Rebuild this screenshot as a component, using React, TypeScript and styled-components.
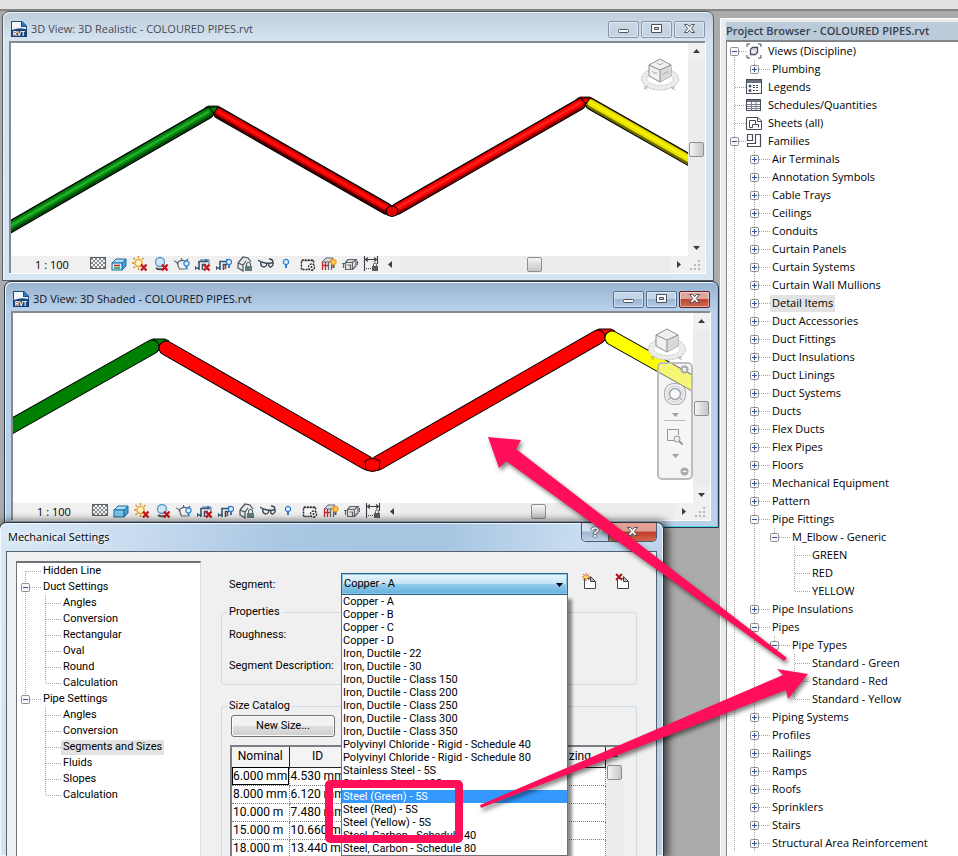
import React from 'react';
import styled, { createGlobalStyle, css } from 'styled-components';

const UI = '"Open Sans", "Noto Sans", sans-serif';
const DLG = 'Roboto, "Liberation Sans", sans-serif';
const PINK = '#ff0f5a';

const Global = createGlobalStyle`
  * { box-sizing: border-box; }
  html, body { margin: 0; padding: 0; background: #ababab; }
  body { font: 11px/18px ${UI}; color: #000; overflow: hidden; }
  ul { list-style: none; margin: 0; padding: 0; }
  button { padding: 0; margin: 0; border: 0; background: none; font: inherit; color: inherit; }
  svg { display: block; flex: none; }
`;

/* ---------- application shell ---------- */

const Shell = styled.div`
  position: relative;
  display: flex;
  flex-direction: column;
  height: 100vh;
  overflow: hidden;
`;
const Ribbon = styled.header`
  flex: none;
  height: 11px;
  background: #e1e2e4;
  border-bottom: 2px solid #858585;
`;
const Workspace = styled.main`
  flex: 1;
  min-height: 0;
  display: flex;
`;
const Desktop = styled.section`
  position: relative;
  isolation: isolate;
  flex: 1;
  min-width: 0;
  background: #ababab;
`;

/* ---------- view windows ---------- */

const ViewWindow = styled.section<{ $active?: boolean; $left: number; $right: number; $top: number }>`
  position: absolute;
  left: ${p => p.$left}px;
  right: ${p => p.$right}px;
  top: ${p => p.$top}px;
  padding: 0 8px 7px 6px;
  border: 1px solid ${p => (p.$active ? '#26384a' : '#555a60')};
  border-radius: 7px 7px 0 0;
  box-shadow: inset 1px 1px 0 #eef4fa${p => (p.$active ? ', inset -1px -1px 0 #4fd4ee' : '')};
  background: ${p =>
    p.$active
      ? 'linear-gradient(#98b2cf, #b8d0ea 28px, #b9d1ea)'
      : 'linear-gradient(#bfcddb, #d6e3f1 28px, #d7e4f2)'};
`;
const TitleBar = styled.header<{ $active?: boolean }>`
  display: flex;
  align-items: center;
  gap: 4px;
  height: 29px;
  padding: 5px 0 0 2px;
  color: ${p => (p.$active ? '#10151b' : '#454c54')};
`;
const TitleText = styled.h2`
  flex: 1;
  margin: 0;
  font: inherit;
  line-height: 16px;
`;
const Captions = styled.div`
  display: flex;
  gap: 2px;
`;
const CaptionButton = styled.button<{ $tone: 'idle' | 'active' | 'close' }>`
  display: grid;
  place-items: center;
  width: 31px;
  height: 17px;
  border-radius: 2px;
  border: 1px solid ${p => ({ idle: '#8695a8', active: '#54708f', close: '#5c2320' })[p.$tone]};
  box-shadow: inset 0 0 0 1px rgba(255, 255, 255, 0.45);
  background: ${p =>
    ({
      idle: 'linear-gradient(#cbd8e6, #c3d1e0)',
      active: 'linear-gradient(#c3d4e7 48%, #9db7d3 50%, #b4cbe4)',
      close: 'linear-gradient(#dfa79c 46%, #bd4733 50%, #cf6a50)',
    })[p.$tone]};
`;
const Frame = styled.div`
  border: solid #858a90;
  border-width: 2px 0 0 2px;
  box-shadow: 1px 1px 0 #fff;
  background: #fff;
`;
const Canvas = styled.div<{ $h: number }>`
  position: relative;
  display: flex;
  height: ${p => p.$h}px;
`;
const Drawing = styled.div`
  flex: 1;
  min-width: 0;
  overflow: hidden;
`;
const Footer = styled.footer`
  display: grid;
  grid-template-columns: 76px auto 1fr 18px;
  align-items: center;
  height: 17px;
  background: #f0f0f0;
`;
const Scale = styled.span`
  padding-left: 24px;
  line-height: 17px;
  white-space: nowrap;
`;
const Tools = styled.div`
  display: grid;
  align-self: start;
  grid-auto-flow: column;
  grid-auto-columns: 21px;
  padding-right: 1px;
`;
const ToolButton = styled.button`
  display: grid;
  place-items: center;
  height: 16px;
`;

const Scroll = styled.div<{ $row?: boolean }>`
  display: flex;
  flex-direction: ${p => (p.$row ? 'row' : 'column')};
  width: ${p => (p.$row ? 'auto' : '17px')};
  height: ${p => (p.$row ? '17px' : 'auto')};
  background: #ececec;
`;
const ScrollArrow = styled.button`
  display: grid;
  place-items: center;
  flex: none;
  width: 17px;
  height: 17px;
  background: #f0f0f0;
`;
const Track = styled.div<{ $start?: boolean }>`
  flex: 1;
  display: flex;
  flex-direction: inherit;
  align-items: center;
  justify-content: ${p => (p.$start ? 'flex-start' : 'center')};
`;
const Thumb = styled.div<{ $row?: boolean }>`
  width: 15px;
  height: 15px;
  margin: 1px;
  border: 1px solid #8e8e8e;
  border-radius: 2px;
  background: linear-gradient(${p => (p.$row ? '180deg' : '90deg')}, #f6f6f6, #dcdcdc 50%, #c6c6ca);
`;
const arrows: Record<string, string> = {
  up: 'M1 6 4.500 2 8 6z',
  down: 'M1 3 8 3 4.500 7z',
  left: 'M6 1 2 4.500 6 8z',
  right: 'M3 1 7 4.500 3 8z',
};
const Arrow = ({ dir, fill = '#3d3d3d' }: { dir: string; fill?: string }) => (
  <svg width="9" height="9" viewBox="0 0 9 9"><path d={arrows[dir]} fill={fill} /></svg>
);
const VScroll = ({ start }: { start?: boolean }) => (
  <Scroll>
    <ScrollArrow aria-label="Scroll up"><Arrow dir="up" /></ScrollArrow>
    <Track $start={start}><Thumb /></Track>
    <ScrollArrow aria-label="Scroll down"><Arrow dir="down" /></ScrollArrow>
  </Scroll>
);
const HScroll = () => (
  <Scroll $row>
    <ScrollArrow aria-label="Scroll left"><Arrow dir="left" /></ScrollArrow>
    <Track><Thumb $row /></Track>
    <ScrollArrow aria-label="Scroll right"><Arrow dir="right" /></ScrollArrow>
  </Scroll>
);

const RvtIcon = () => (
  <svg width="16" height="16" viewBox="0 0 16 16">
    <path d="M0 0H11L16 5V16H0Z" fill="#1c4d86" />
    <path d="M1 1H10V6H15V8Q8 6 1 9Z" fill="#f2f7fc" />
    <path d="M11 0 16 5H11Z" fill="#2f75b8" />
    <rect y="9" width="16" height="7" fill="#163d70" />
    <text x="8" y="15" fontSize="7" fontWeight="700" fontFamily="Liberation Mono" textAnchor="middle" fill="#fff">RVT</text>
  </svg>
);
const glyph = { fill: '#fafafa', stroke: '#4b535e' };
const MinGlyph = () => <svg width="13" height="12"><rect x="1.500" y="6.500" width="10" height="3" rx="1" {...glyph} /></svg>;
const MaxGlyph = () => (
  <svg width="13" height="12"><path d="M1.500 1.500h10v8h-10zM4.500 4.500v2h4v-2z" fillRule="evenodd" {...glyph} /></svg>
);
const CloseGlyph = () => (
  <svg width="13" height="12" viewBox="0 0 13 12">
    <path d="M1.500 1.500H4.500L6.500 3.700 8.500 1.500H11.500L8.300 5.500 11.500 9.500H8.500L6.500 7.300 4.500 9.500H1.500L4.700 5.500Z" {...glyph} />
  </svg>
);

/* ---------- view control icons ---------- */

const Svg16 = ({ children }: { children: React.ReactNode }) => (
  <svg width="16" height="16" viewBox="0 0 16 16" fill="none">{children}</svg>
);
const RedX = () => <path d="M9 8.500 14.500 14.500M14.500 8.500 9 14.500" stroke="#c4161c" strokeWidth="2.300" />;
const Bulb = ({ x = 12, y = 6, on }: { x?: number; y?: number; on?: boolean }) => (
  <g transform={`translate(${x} ${y})`}>
    <circle r="2.600" fill={on ? '#ffc94d' : '#dff0ff'} stroke={on ? '#f09a1c' : '#2a7fd0'} strokeWidth="1.200" />
    <path d="M-1 3H1V6H-1Z" fill={on ? '#555' : '#2a7fd0'} />
  </g>
);
const Pads = () => (
  <path d="M0 12H2M4 14V5.500H13M7.500 14V8.500H11M0 10V14M4 12H2M11 3V5" stroke="#34536e" strokeWidth="1.600" />
);
const Lock = () => (
  <g><path d="M9.500 10V8.500a2 2 0 0 1 4 0V10" stroke="#4a6660" strokeWidth="1.200" /><rect x="8" y="10" width="7" height="5" fill="#5d8076" /></g>
);
const checks = Array.from({ length: 35 }, (_, i) => [1 + (i % 7) * 2, 2 + Math.floor(i / 7) * 2, i % 2] as const).filter(c => c[2] === 0);

const icons: [string, (shaded?: boolean) => React.ReactNode][] = [
  ['Detail level', () => (
    <Svg16>
      <rect x=".5" y="1.500" width="15" height="11" fill="#f4f5f6" stroke="#5a5f66" />
      {checks.map(([x, y], i) => <rect key={i} x={x} y={y} width="2" height="2" fill="#858a91" />)}
    </Svg16>
  )],
  ['Visual style', s => (
    <Svg16>
      <path d="M1 7 5 3H15L11 7Z" fill="#a8e0f6" stroke="#1c6b9f" />
      <path d="M11 7 15 3V10L11 14Z" fill="#4aa3d2" stroke="#1c6b9f" />
      <rect x="1" y="7" width="10" height="7" fill={s ? '#7cc4e8' : '#c9ecfa'} stroke="#1c6b9f" />
      {!s && <><path d="M3 9.500H9" stroke="#e0202a" strokeWidth="1.500" /><path d="M3 12H9" stroke="#22a23a" strokeWidth="1.500" /></>}
    </Svg16>
  )],
  ['Sun path', () => (
    <Svg16>
      <path d="M6.500 0V2M1.500 2 3 3.500M11.500 2 10 3.500M0 7H2M1.500 12 3 10.500M6.500 12V14" stroke="#d98b1f" strokeWidth="1.300" />
      <circle cx="6.500" cy="7" r="3.600" fill="#fff0b8" stroke="#e0a02c" strokeWidth="1.300" /><RedX />
    </Svg16>
  )],
  ['Shadows', () => (
    <Svg16>
      <circle cx="7" cy="6" r="4.500" fill="#cfe6f8" stroke="#5b95c8" strokeWidth="1.300" />
      <path d="M3 12Q5 14 10 13" stroke="#555" strokeWidth="2" /><RedX />
    </Svg16>
  )],
  ['Rendering', () => (
    <Svg16>
      <path d="M4 6Q8 3 11.500 5.500M7.500 4V2M4 6Q3.500 10 5.500 13H11M4 9Q2.500 5 0 5M11.500 5.500 14 3" stroke="#5b646e" strokeWidth="1.200" fill="#f2f2f2" /><Bulb x={12.5} y={7.5} />
    </Svg16>
  )],
  ['Crop view', () => <Svg16><Pads /><path d="M5 4H14V8" stroke="#2f6fb0" /><RedX /></Svg16>],
  ['Show crop region', () => <Svg16><Pads /><path d="M9.500 9V13" stroke="#d0202a" strokeWidth="1.500" /><Bulb x={13} y={6} /></Svg16>],
  ['Lock 3D view', () => (
    <Svg16>
      <path d="M1 7 6 1 11 2 14 6M1 7V12L6 15V9M1 7 6 9 9 5" stroke="#4b535c" strokeWidth="1.200" fill="#e6e8ea" /><Lock />
    </Svg16>
  )],
  ['Temporary hide', () => (
    <Svg16>
      <path d="M0 4 3 6 9 7.500M3 6Q2 10 5.500 11 8.500 11 9 7.500M9 7.500Q10 6.500 11 7.500M11 7.500Q10 11 13 11 16 9 15 6.500L11 7.500M15 6.500Q15 3 11 3" stroke="#34424e" strokeWidth="1.300" />
    </Svg16>
  )],
  ['Reveal hidden', () => <Svg16><Bulb x={7} y={6} /></Svg16>],
  ['Worksharing', () => (
    <Svg16>
      <rect x="1.500" y="4.500" width="12" height="9" fill="#f7f7f7" stroke="#222" strokeDasharray="2 1" strokeWidth="1.400" />
      <path d="M3 3V5M6 3V5M9 3V5M12 3V5" stroke="#222" /><circle cx="11.500" cy="11" r="3" fill="#fff" stroke="#222" strokeDasharray="2 1" strokeWidth="1.300" /><circle cx="11.500" cy="11" r="1" fill="#222" />
    </Svg16>
  )],
  ['Analytical model', () => (
    <Svg16>
      <path d="M1 6 5 2H12L9 6Z" fill="#d7d9db" stroke="#62676d" /><path d="M1.500 6V14M4.500 6V14M1 9.500H8" stroke="#c4262c" strokeWidth="1.300" /><path d="M7.500 6V14M10.500 6V14" stroke="#62676d" strokeWidth="1.300" />
      <Bulb x={12.5} y={6} on />
    </Svg16>
  )],
  ['Displacement', () => (
    <Svg16>
      <path d="M3.500 6.500 6 3.500H14L10.500 6.500M14 3.500V10L10.500 13.500" stroke="#60656c" strokeWidth="1.200" fill="#d4d6d9" />
      <path d="M3.500 6.500H10.500V13.500H3.500ZM5.500 9H8.500V13.500M1.500 7V12M0 7.500H3M15.500 5V9" stroke="#60656c" strokeWidth="1.200" fill="#e4e6e8" />
    </Svg16>
  )],
  ['Constraints', () => (
    <Svg16>
      <path d="M1.500 0V15M14.500 0V8M1.500 3.500H14.500M5 1.500 2.500 3.500 5 5.500M11 1.500 13.500 3.500 11 5.500" stroke="#3b4047" strokeWidth="1.100" />
      <path d="M3 12.500H9" stroke="#3b4047" strokeDasharray="1 1" /><path d="M10.500 10V8.500a1.500 1.500 0 0 1 3 0V10" stroke="#555" /><rect x="9" y="10" width="6" height="5" fill="#5c5c5c" />
    </Svg16>
  )],
];

const ViewFooter = ({ shaded }: { shaded?: boolean }) => (
  <Footer>
    <Scale>1 : 100</Scale>
    <Tools>
      {icons.map(([name, draw]) => <ToolButton key={name} aria-label={name}>{draw(shaded)}</ToolButton>)}
    </Tools>
    <HScroll />
    <svg width="17" height="17" viewBox="0 0 17 17">
      {[[11, 4], [7, 8], [11, 8], [3, 12], [7, 12], [11, 12]].map(([x, y]) => <rect key={`${x} ${y}`} x={x} y={y} width="2" height="2" fill="#b9b9b9" />)}
    </svg>
  </Footer>
);

/* ---------- pipe drawings ---------- */

type Seg = [number, number, number, number, string, string, string];
const RED = ['#fa0000', '#8a0000', '#ff2020'];
const RED_SHADE = ['#e40000', '#500000', '#ff1010'];
const GREEN = ['#07820f', '#034a08', '#22b028'];
const YELLOW = ['#e6df00', '#6e6900', '#f8f200'];

const RealPipe = ({ s: [x1, y1, x2, y2, base, dark, light] }: { s: Seg }) => {
  const line = { x1, y1, x2, y2, strokeLinecap: 'round' as const };
  return (
    <g>
      <line {...line} stroke="#000" strokeWidth="12" />
      <line {...line} stroke={dark} strokeWidth="10" />
      <g transform="translate(0 -1)">
        <line {...line} stroke={base} strokeWidth="7" />
        <line {...line} stroke={light} strokeWidth="2.500" />
      </g>
    </g>
  );
};
const FlatPipe = ({ s: [x1, y1, x2, y2, base] }: { s: Seg }) => (
  <g strokeLinecap="round">
    <line x1={x1} y1={y1} x2={x2} y2={y2} stroke="#000" strokeWidth="15" />
    <line x1={x1} y1={y1} x2={x2} y2={y2} stroke={base} strokeWidth="13" />
  </g>
);
const Wedge = ({ x, y, fill, s = 1 }: { x: number; y: number; fill: string; s?: number }) => (
  <path transform={`translate(${x} ${y}) scale(${s})`} d="M-10 2 -6 0H6L10 2 0 12Z" fill={fill} stroke="#000" />
);
const ViewCube = ({ x, y, marks }: { x: number; y: number; marks?: boolean }) => (
  <g transform={`translate(${x} ${y})`} fill="none">
    <ellipse cx="0" cy="8" rx="16" ry="8.500" stroke="#ececec" strokeWidth="5" />
    <ellipse cx="0" cy="8" rx="18.500" ry="11" stroke="#c4c4c4" strokeDasharray="3 1" />
    <ellipse cx="0" cy="8" rx="13" ry="6.500" stroke="#d4d4d4" strokeDasharray="3 1" />
    <path d="M-11-6 0-12 11-6V5L0 11-11 5Z" fill="#f0f0f0" stroke="#8d8d8d" />
    <path d="M0-1 11-6V5L0 11Z" fill="#d9d9d9" />
    <path d="M-11-6 0-1 11-6M0-1V11" stroke="#8d8d8d" />
    {marks && <path d="M-3-8 0-6 3-8M-8 0-6 2-3 2M3 4 6 1 9 1" stroke="#aaa" />}
    <path d="M-16 15 -13 19M-12 15-16 18M11 16 15 19M15 15 12 18" stroke="#aaa" />
  </g>
);
const RealisticDrawing = () => (
  <svg width="677" height="213" viewBox="11 43 677 213">
    <Wedge x={213} y={106} fill="#07820f" s={0.8} />
    <Wedge x={585} y={97} fill="#f40000" s={0.8} />
    <RealPipe s={[5, 230, 208, 113, ...GREEN] as Seg} />
    <RealPipe s={[580, 104, 397, 209, ...RED] as Seg} />
    <RealPipe s={[219, 113, 387, 209, ...RED_SHADE] as Seg} />
    <RealPipe s={[591, 104, 700, 166, ...YELLOW] as Seg} />
    <path d="M209 107H218L214 113Z" fill="#07820f" stroke="#000" />
    <path d="M581 98H590L586 104Z" fill="#f40000" stroke="#000" />
    <path d="M386 209Q392 203 398 209L397 215Q392 218 387 215Z" fill="#e80000" stroke="#000" />
    <ViewCube x={660} y={71} marks />
  </svg>
);
const ShadedDrawing = () => (
  <svg width="680" height="190" viewBox="13 313 680 190">
    <Wedge x={159} y={339} fill="#008000" />
    <Wedge x={605} y={329} fill="#ff0000" />
    <FlatPipe s={[5, 430, 152, 347, '#008000', '', '']} />
    <FlatPipe s={[378, 463, 598, 337, '#ff0000', '', '']} />
    <FlatPipe s={[166, 348, 367, 463, '#ff0000', '', '']} />
    <FlatPipe s={[612, 338, 710, 393, '#ffff00', '', '']} />
    <path d="M365 461Q372 456 380 461L379 470Q372 473 366 470Z" fill="#ff0000" stroke="#000" />
    <ViewCube x={667} y={341} />
  </svg>
);

const NavBar = styled.nav`
  position: absolute;
  right: 17px;
  top: 49px;
  width: 36px;
  height: 118px;
  padding: 15px 5px 3px;
  display: flex;
  flex-direction: column;
  align-items: center;
  border: 2px solid #bdbdbd;
  border-radius: 5px;
  background: rgba(236, 236, 236, 0.5);
`;
const NavButton = styled.button<{ $h: number }>`
  display: grid;
  place-items: center;
  height: ${p => p.$h}px;
`;
const NavRule = styled.hr`
  width: 100%;
  margin: 0 0 7px;
  border: 0;
  border-top: 1px solid #bcbcbc;
`;
const NavCorner = styled.button<{ $bottom?: boolean }>`
  position: absolute;
  right: 2px;
  ${p => (p.$bottom ? 'bottom: 2px' : 'top: 1px')};
`;
const Corner = ({ d }: { d: string }) => (
  <svg width="9" height="9" viewBox="0 0 9 9"><circle cx="4.500" cy="4.500" r="4" fill="#aaa" /><path d={d} stroke="#fff" strokeWidth="1.200" /></svg>
);
const NavigationBar = () => (
  <NavBar aria-label="Navigation">
    <NavCorner aria-label="Close"><Corner d="M3 3 6 6M6 3 3 6" /></NavCorner>
    <NavButton $h={29} aria-label="Steering wheel">
      <svg width="24" height="24" viewBox="0 0 24 24" fill="none" stroke="#a5a5ab">
        <rect x="1.500" y="1.500" width="21" height="21" rx="9" fill="#eeeef2" /><circle cx="12" cy="12" r="8" stroke="#d0d0d6" /><circle cx="12" cy="12" r="5.500" fill="#f8f8fa" strokeWidth="1.500" />
        <path d="M5 18 8 15M19 18 16 15" />
      </svg>
    </NavButton>
    <NavButton $h={12} aria-label="Wheel options"><Arrow dir="down" fill="#a0a0a0" /></NavButton>
    <NavRule />
    <NavButton $h={18} aria-label="Zoom region">
      <svg width="18" height="18" viewBox="0 0 18 18" fill="none" stroke="#96969a">
        <path d="M8 12.500H1.500V1.500H12.500V7" /><circle cx="11" cy="11" r="3" fill="#eee" /><path d="M13 13 16.500 16.500" strokeWidth="2" />
      </svg>
    </NavButton>
    <NavButton $h={18} aria-label="Zoom options"><Arrow dir="down" fill="#a0a0a0" /></NavButton>
    <NavCorner $bottom aria-label="Customize"><Corner d="M2.500 4.500H6.500" /></NavCorner>
  </NavBar>
);

type ViewProps = { title: string; active?: boolean; left: number; right: number; top: number; h: number; children: React.ReactNode };
const View = ({ title, active, left, right, top, h, children }: ViewProps) => (
  <ViewWindow $active={active} $left={left} $right={right} $top={top}>
    <TitleBar $active={active}>
      <RvtIcon />
      <TitleText>{title}</TitleText>
      <Captions>
        <CaptionButton $tone={active ? 'active' : 'idle'} aria-label="Minimize"><MinGlyph /></CaptionButton>
        <CaptionButton $tone={active ? 'active' : 'idle'} aria-label="Restore"><MaxGlyph /></CaptionButton>
        <CaptionButton $tone={active ? 'close' : 'idle'} aria-label="Close"><CloseGlyph /></CaptionButton>
      </Captions>
    </TitleBar>
    <Frame>
      <Canvas $h={h}>
        <Drawing>{children}</Drawing>
        {active && <NavigationBar />}
        <VScroll />
      </Canvas>
      <ViewFooter shaded={active} />
    </Frame>
  </ViewWindow>
);

/* ---------- trees ---------- */

type Node = { t: string; open?: boolean; kids?: Node[]; icon?: React.ReactNode; sel?: boolean };
const dots = (dir: string) => `repeating-linear-gradient(${dir}, #a4a4a4 0 1px, transparent 1px 2px)`;

const TreeRow = styled.li<{ $h: number }>`
  display: flex;
  align-items: center;
  height: ${p => p.$h}px;
`;
const Rail = styled.span<{ $line: 'none' | 'full' | 'top' | 'bottom'; $arm?: boolean; $w?: number }>`
  flex: none;
  display: flex;
  align-items: center;
  align-self: stretch;
  width: ${p => p.$w ?? 20}px;
  background-repeat: no-repeat;
  ${p => {
    const v = { none: '0', full: '100%', top: '50%', bottom: '50%' }[p.$line];
    return css`
      background-image: ${dots('180deg')}${p.$arm ? `, ${dots('90deg')}` : ''};
      background-size: 1px ${v}, ${(p.$w ?? 20) - 5}px 1px;
      background-position: 4px ${p.$line === 'bottom' ? '100%' : '0'}, 5px 50%;
      ${v === '0' && !p.$arm ? 'background-image: none;' : ''}
    `;
  }}
`;
const Expander = styled.button`
  display: block;
  background: #fff;
`;
const Label = styled.span<{ $sel?: boolean; $h: number }>`
  padding: 0 2px;
  line-height: ${p => p.$h - 2}px;
  height: ${p => p.$h - 1}px;
  white-space: nowrap;
  background: ${p => (p.$sel ? '#e3e3e3' : 'none')};
`;
const IconSlot = styled.span`
  margin-right: 4px;
`;
const ExpandIcon = ({ open }: { open?: boolean }) => (
  <svg width="9" height="9" viewBox="0 0 9 9">
    <rect x=".5" y=".5" width="8" height="8" rx="1" fill="#f6f6f6" stroke="#8f8f8f" />
    <path d={open ? 'M2 4.500H7' : 'M2 4.500H7M4.500 2V7'} stroke="#33509b" />
  </svg>
);

type TreeProps = { nodes: Node[]; h: number; rails?: boolean[]; more?: boolean };
const Rows = ({ nodes, h, rails = [], more }: TreeProps): React.ReactElement => (
  <>
    {nodes.map((n, i) => {
      const last = i === nodes.length - 1 && !more;
      const first = i === 0 && rails.length === 0;
      return (
        <React.Fragment key={n.t}>
          <TreeRow $h={h}>
            {rails.map((on, k) => <Rail key={k} $line={on ? 'full' : 'none'} />)}
            <Rail $line={first ? 'bottom' : last ? 'top' : 'full'} $arm $w={n.icon ? 16 : 20}>
              {n.open !== undefined && (
                <Expander aria-label={`Toggle ${n.t}`} aria-expanded={n.open}><ExpandIcon open={n.open} /></Expander>
              )}
            </Rail>
            {n.icon && <IconSlot>{n.icon}</IconSlot>}
            <Label $sel={n.sel} $h={h}>{n.t}</Label>
          </TreeRow>
          {n.kids && <Rows nodes={n.kids} h={h} rails={[...rails, !last]} more={more && i === nodes.length - 1} />}
        </React.Fragment>
      );
    })}
  </>
);

/* ---------- project browser ---------- */

const Browser = styled.aside`
  flex: none;
  width: 238px;
  margin-top: 7px;
  padding: 3px 0 0 5px;
  display: flex;
  flex-direction: column;
  background: #ebebeb;
  border: solid #fff;
  border-width: 1px 0 0 1px;
`;
const BrowserTitle = styled.h2`
  margin: 0;
  height: 18px;
  background: #bccbd9;
  color: #33414e;
  font-weight: 600;
  font-size: 11px;
  line-height: 17px;
`;
const BrowserTree = styled.ul`
  flex: 1;
  min-height: 0;
  overflow: hidden;
  padding-left: 3px;
  background: #fff;
  border: solid #80858a;
  border-width: 2px 0 0 1px;
`;

const ink = '#454b57';
const ViewsIcon = (
  <Svg16>
    <path d="M1 4V1H4M12 1H15V4M15 12V15H12M4 15H1V12" stroke={ink} />
    <path d="M4.500 6.500 6.500 4.500H11.500V9.500L9.500 11.500H4.500Z" fill="#f4f5f7" stroke={ink} strokeWidth="1.300" /><path d="M9.500 11V6.500H5" stroke="#c5c8ce" />
  </Svg16>
);
const LegendIcon = (
  <Svg16>
    <rect x=".5" y=".5" width="15" height="14" fill="#fff" stroke={ink} /><rect x="1" y="1" width="14" height="3" fill="#69717f" />
    <circle cx="4" cy="7" r="1.500" fill="#4d5563" /><circle cx="4" cy="11.500" r="1.500" fill="#4d5563" />
    <path d="M7 6.500H13M7 8.500H13M7 11.500H13" stroke={ink} strokeDasharray="2 1" />
  </Svg16>
);
const ScheduleIcon = (
  <Svg16>
    <rect x=".5" y="2.500" width="14" height="11" fill="#fff" stroke={ink} /><rect x="1" y="3" width="13" height="2" fill="#69717f" />
    <path d="M1 7.500H14M1 9.500H14M1 11.500H14M5.500 5V13M10 5V13" stroke="#79828b" />
  </Svg16>
);
const SheetIcon = (
  <Svg16>
    <path d="M.5 2.500H12L15.500 6V14.500H.5Z" fill="#fff" stroke={ink} /><path d="M11.500 3V6.500H15" stroke={ink} />
    <path d="M3.500 5.500H9.500V9.500H6.500V12.500H3.500ZM9.500 9.500H12.500V12.500" stroke={ink} />
  </Svg16>
);
const FamilyIcon = (
  <Svg16>
    <path d="M1.500 1.500H6.500V7.500H1.500ZM9.500 1.500H14.500V13.500H1.500V10.500H9.500Z" fill="#fff" stroke={ink} strokeWidth="1.200" />
  </Svg16>
);
const closed = (t: string): Node => ({ t, open: false });
const browserNodes: Node[] = [
  { t: 'Views (Discipline)', open: true, icon: ViewsIcon, kids: [closed('Plumbing')] },
  { t: 'Legends', icon: LegendIcon },
  { t: 'Schedules/Quantities', icon: ScheduleIcon },
  { t: 'Sheets (all)', icon: SheetIcon },
  {
    t: 'Families', open: true, icon: FamilyIcon,
    kids: [
      ...['Air Terminals', 'Annotation Symbols', 'Cable Trays', 'Ceilings', 'Conduits', 'Curtain Panels', 'Curtain Systems', 'Curtain Wall Mullions'].map(closed),
      { t: 'Detail Items', open: false, sel: true },
      ...['Duct Accessories', 'Duct Fittings', 'Duct Insulations', 'Duct Linings', 'Duct Systems', 'Ducts', 'Flex Ducts', 'Flex Pipes', 'Floors', 'Mechanical Equipment', 'Pattern'].map(closed),
      { t: 'Pipe Fittings', open: true, kids: [{ t: 'M_Elbow - Generic', open: true, kids: [{ t: 'GREEN' }, { t: 'RED' }, { t: 'YELLOW' }] }] },
      closed('Pipe Insulations'),
      { t: 'Pipes', open: true, kids: [{ t: 'Pipe Types', open: true, kids: [{ t: 'Standard - Green' }, { t: 'Standard - Red' }, { t: 'Standard - Yellow' }] }] },
      ...['Piping Systems', 'Profiles', 'Railings', 'Ramps', 'Roofs', 'Sprinklers', 'Stairs', 'Structural Area Reinforcement'].map(closed),
    ],
  },
];

/* ---------- mechanical settings dialog ---------- */

const Dialog = styled.section`
  position: absolute;
  left: -1px;
  top: 511px;
  bottom: 0;
  width: 665px;
  padding: 0 6px;
  display: flex;
  flex-direction: column;
  font: 11px/16px ${DLG};
  border: 1px solid #2c3440;
  border-bottom: 0;
  border-radius: 7px 7px 0 0;
  background: linear-gradient(100deg, #d8e8f6 0, #c9ddf0 18%, #a9c6e2 40%, #a7c5e1 62%, #c7dcf0 80%, #b4cfe8 100%);
  box-shadow: inset 0 0 0 1px rgba(255, 255, 255, 0.75), 2px 1px 9px 2px rgba(0, 0, 0, 0.65);
`;
const DialogTitle = styled.header`
  display: flex;
  justify-content: space-between;
  align-items: flex-start;
  height: 28px;
  flex: none;
`;
const DialogName = styled.h2`
  margin: 0;
  padding-left: 2px;
  font: 11px/28px ${UI};
  text-shadow: 0 0 6px #fff, 0 0 6px #fff;
`;
const DialogCaptions = styled.div`
  display: flex;
  height: 19px;
  border: 1px solid #4c5a6b;
  border-top: 0;
  border-radius: 0 0 5px 5px;
  overflow: hidden;
`;
const DialogCaption = styled.button<{ $close?: boolean }>`
  display: grid;
  place-items: center;
  width: ${p => (p.$close ? 47 : 27)}px;
  color: #fff;
  font: 700 15px/16px "Liberation Sans", sans-serif;
  text-shadow: 0 0 1px #222, 0 0 2px #222, 0 0 1px #222;
  border-right: ${p => (p.$close ? 0 : 1)}px solid #4c5a6b;
  background: ${p => (p.$close ? 'linear-gradient(#e3a193 45%, #c03c28 50%, #d4664b)' : 'linear-gradient(#d0dfec 45%, #9fb6cd 50%, #bdd2e6)')};
`;
const DialogBody = styled.div`
  flex: 1;
  min-height: 0;
  display: grid;
  grid-template-columns: 185px minmax(0, 1fr);
  gap: 20px;
  padding: 9px 19px 0 9px;
  background: #f0f0f0;
  border: 1px solid #55616f;
  border-bottom: 0;
`;
const SettingsTree = styled.ul`
  min-height: 0;
  padding-left: 4px;
  background: #fff;
  border: solid #6f7479;
  border-width: 2px 1px 0 1px;
  border-right-color: #dcdcdc;
`;
const Settings = styled.form`
  min-width: 0;
  min-height: 0;
  padding-top: 12px;
  display: flex;
  flex-direction: column;
`;
const SegmentRow = styled.div`
  flex: none;
  display: flex;
  align-items: flex-start;
  height: 23px;
  padding-left: 8px;
`;
const SegmentLabel = styled.label`
  flex: none;
  width: 112px;
  padding-top: 4px;
`;
const Combo = styled.div`
  position: relative;
  flex: none;
  width: 227px;
  height: 22px;
  margin-right: 14px;
`;
const ComboSelect = styled.select`
  display: block;
  appearance: none;
  width: 100%;
  height: 22px;
  padding: 0 2px;
  border: 1px solid #2d5f87;
  box-shadow: inset 0 0 0 1px #8fc6e6;
  border-radius: 0;
  color: #000;
  font: inherit;
  background: linear-gradient(#e4f3fb 0 10%, #c3e3f4 48%, #93cbea 52%, #61b0dc);
`;
const ComboArrow = styled.span`
  position: absolute;
  right: 4px;
  top: 7px;
  pointer-events: none;
`;
const ComboList = styled.ul`
  position: absolute;
  z-index: 1;
  left: 0;
  top: 100%;
  width: 100%;
  border: 1px solid #6f7377;
  border-top: 0;
  background: #fff;
  box-shadow: 4px 4px 3px rgba(0, 0, 0, 0.45);
`;
const ComboOption = styled.li<{ $on?: boolean }>`
  height: 13px;
  padding-left: 1px;
  line-height: 13px;
  color: ${p => (p.$on ? '#fff' : '#000')};
  background: ${p => (p.$on ? '#3399ff' : 'none')};
`;
const PageButton = styled.button`
  width: 16px;
  height: 18px;
  margin-right: 17px;
`;
const Group = styled.fieldset`
  min-width: 0;
  margin: 8px 0 0;
  padding: 0 9px 10px 7px;
  border: 1px solid #d0dce6;
  border-radius: 3px;
`;
const CatalogGroup = styled(Group)`
  flex: 1;
  margin-top: 13px;
  padding: 0 9px;
  border-bottom: 0;
`;
const Legend = styled.legend<{ $pull: number }>`
  margin-left: -${p => p.$pull}px;
  padding: 0 2px;
`;
const GroupText = styled.p<{ $gap: number }>`
  margin: ${p => p.$gap}px 0 0;
`;
const PushButton = styled.button`
  display: block;
  width: 104px;
  height: 22px;
  margin-top: 1px;
  border: 1px solid #707070;
  border-radius: 3px;
  box-shadow: inset 0 0 0 1px #fbfbfb;
  background: linear-gradient(#f2f2f2 48%, #dedede 50%, #cfcfcf);
`;
const TableBox = styled.div`
  display: grid;
  grid-template-columns: minmax(0, 1fr) 17px;
  align-items: start;
  margin: 8px 4px 0 -1px;
  border: solid #7b7f83;
  border-width: 2px 0 0 2px;
  > :last-child { height: 180px; }
`;
const SizeTable = styled.table`
  width: 100%;
  table-layout: fixed;
  border-collapse: collapse;
  background: #fff;
  font: 12px/17px ${DLG};
`;
const HeadCell = styled.th<{ $w?: number }>`
  width: ${p => (p.$w ? `${p.$w}px` : 'auto')};
  height: 20px;
  padding: 0;
  font-weight: 400;
  background: #f4f4f4;
  border-right: 1px solid #222;
  border-bottom: 1px solid #222;
  white-space: nowrap;
  overflow: hidden;
`;
const Cell = styled.td<{ $focus?: boolean }>`
  height: 18px;
  padding: 0 0 0 1px;
  line-height: 17px;
  border-right: 1px dotted #808080;
  border-bottom: 1px dotted #808080;
  white-space: nowrap;
  overflow: hidden;
  ${p => p.$focus && 'outline: 1px solid #000; outline-offset: -1px;'}
`;

const settingsNodes: Node[] = [
  { t: 'Hidden Line' },
  { t: 'Duct Settings', open: true, kids: ['Angles', 'Conversion', 'Rectangular', 'Oval', 'Round', 'Calculation'].map(t => ({ t })) },
  {
    t: 'Pipe Settings', open: true,
    kids: ['Angles', 'Conversion', 'Segments and Sizes', 'Fluids', 'Slopes', 'Calculation'].map(t => ({ t, sel: t === 'Segments and Sizes' })),
  },
];
const segments = [
  'Copper - A', 'Copper - B', 'Copper - C', 'Copper - D', 'Iron, Ductile - 22', 'Iron, Ductile - 30',
  'Iron, Ductile - Class 150', 'Iron, Ductile - Class 200', 'Iron, Ductile - Class 250', 'Iron, Ductile - Class 300', 'Iron, Ductile - Class 350',
  'Polyvinyl Chloride - Rigid - Schedule 40', 'Polyvinyl Chloride - Rigid - Schedule 80', 'Stainless Steel - 5S', 'Stainless Steel - 10S',
  'Steel (Green) - 5S', 'Steel (Red) - 5S', 'Steel (Yellow) - 5S', 'Steel, Carbon - Schedule 40', 'Steel, Carbon - Schedule 80',
];
const sizes = [['6.000 mm', '4.530 mm'], ['8.000 mm', '6.120 mm'], ['10.000 m', '7.480 mm'], ['15.000 m', '10.660 m'], ['18.000 m', '13.440 m']];

const PageIcon = ({ remove }: { remove?: boolean }) => (
  <svg width="16" height="18" viewBox="0 0 16 18" fill="none">
    <path d="M2.500 5.500H9.500L13.500 9V15.500H2.500Z" fill="#fff" stroke="#444" /><path d="M8.500 3.500 13.500 8.500H8.500Z" fill="#bbb" stroke="#444" />
    {remove
      ? <path d="M1 1 7 7M7 1 1 7" stroke="#b5121b" strokeWidth="2" />
      : <><path d="M4 0V8M0 4H8M1 1 7 7M7 1 1 7" stroke="#d9571c" /><circle cx="4" cy="4" r="1.800" fill="#ffe25c" /></>}
  </svg>
);

const PropertiesGroup = () => (
  <Group>
    <Legend $pull={2}>Properties</Legend>
    <GroupText $gap={7}>Roughness:</GroupText>
    <GroupText $gap={15}>Segment Description:</GroupText>
  </Group>
);
const SizeCatalog = () => (
  <CatalogGroup>
    <Legend $pull={4}>Size Catalog</Legend>
    <PushButton type="button">New Size...</PushButton>
    <TableBox>
      <SizeTable>
        <thead>
          <tr>
            <HeadCell $w={57}>Nominal</HeadCell>
            <HeadCell $w={57}>ID</HeadCell>
            <HeadCell $w={57} aria-label="OD" />
            <HeadCell aria-label="Used in Size Lists" />
            <HeadCell $w={104}>Used in Sizing</HeadCell>
          </tr>
        </thead>
        <tbody>
          {sizes.map(([n, id], i) => <tr key={n}><Cell $focus={i === 0}>{n}</Cell><Cell>{id}</Cell><Cell /><Cell /><Cell /></tr>)}
        </tbody>
      </SizeTable>
      <VScroll start />
    </TableBox>
  </CatalogGroup>
);

const MechanicalSettings = () => (
  <Dialog role="dialog" aria-label="Mechanical Settings">
    <DialogTitle>
      <DialogName>Mechanical Settings</DialogName>
      <DialogCaptions>
        <DialogCaption aria-label="Help">?</DialogCaption>
        <DialogCaption $close aria-label="Close"><CloseGlyph /></DialogCaption>
      </DialogCaptions>
    </DialogTitle>
    <DialogBody>
      <SettingsTree><Rows nodes={settingsNodes} h={16} /></SettingsTree>
      <Settings>
        <SegmentRow>
          <SegmentLabel htmlFor="segment">Segment:</SegmentLabel>
          <Combo>
            <ComboSelect id="segment" defaultValue="Copper - A">
              {segments.map(s => <option key={s}>{s}</option>)}
            </ComboSelect>
            <ComboArrow><Arrow dir="down" fill="#000" /></ComboArrow>
            <ComboList role="listbox" aria-label="Segments">
              {segments.map(s => (
                <ComboOption key={s} role="option" aria-selected={s === 'Steel (Green) - 5S'} $on={s === 'Steel (Green) - 5S'}>{s}</ComboOption>
              ))}
            </ComboList>
          </Combo>
          <PageButton type="button" aria-label="New segment"><PageIcon /></PageButton>
          <PageButton type="button" aria-label="Delete segment"><PageIcon remove /></PageButton>
        </SegmentRow>
        <PropertiesGroup />
        <SizeCatalog />
      </Settings>
    </DialogBody>
  </Dialog>
);

/* ---------- callouts drawn over the desktop ---------- */

const CalloutLayer = styled.svg<{ $shadow?: boolean }>`
  position: absolute;
  left: 0;
  top: 0;
  pointer-events: none;
  filter: ${p => (p.$shadow ? 'drop-shadow(2px 3px 2px rgba(0, 0, 0, 0.5))' : 'none')};
`;

export default function App() {
  return (
    <Shell>
      <Global />
      <Ribbon />
      <Workspace>
        <Desktop>
          <View title="3D View: 3D Realistic - COLOURED PIPES.rvt" left={2} right={6} top={0} h={213}>
            <RealisticDrawing />
          </View>
          <View title="3D View: 3D Shaded - COLOURED PIPES.rvt" active left={4} right={1} top={270} h={190}>
            <ShadedDrawing />
          </View>
          <MechanicalSettings />
        </Desktop>
        <Browser>
          <BrowserTitle>Project Browser - COLOURED PIPES.rvt</BrowserTitle>
          <BrowserTree><Rows nodes={browserNodes} h={18} more /></BrowserTree>
        </Browser>
      </Workspace>
      <CalloutLayer width="958" height="856">
        <rect x="329" y="784" width="130" height="55" rx="1" fill="none" stroke={PINK} strokeWidth="8" strokeLinejoin="round" />
      </CalloutLayer>
      <CalloutLayer $shadow width="958" height="856">
        <path d="M488 437 521 440 516 449 787 658 784 661 506 461 499 468Z" fill={PINK} />
        <path d="M480 805 783 675 777 669 808 674 788 699 786 690 481 808Z" fill={PINK} />
      </CalloutLayer>
    </Shell>
  );
}
